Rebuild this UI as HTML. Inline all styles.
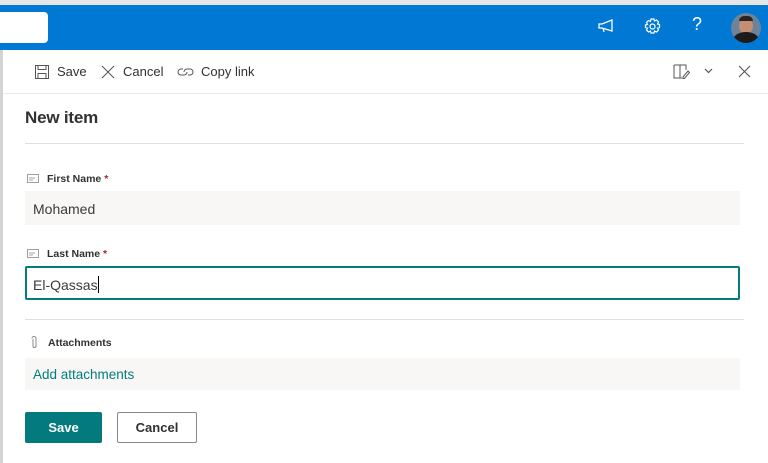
<!DOCTYPE html>
<html><head><style>
*{box-sizing:border-box;margin:0;padding:0}
body{width:768px;height:463px;overflow:hidden;background:#fff;font-family:"Liberation Sans",sans-serif;position:relative;color:#323130}
.a{position:absolute}
.top{left:0;top:0;width:768px;height:5px;background:#e6e6e6}
.bar{left:0;top:5px;width:768px;height:45px;background:#0078d4}
.search{left:-6px;top:12px;width:54px;height:31px;background:#fff;border-radius:4px}
.lb{left:0;top:50px;width:3px;height:413px;background:#d4d4d4}
.cmd{font-size:13px;color:#323130;top:64px}
.lbl{font-size:10.5px;font-weight:bold;color:#323130}
.star{color:#a4262c}
.fld{background:#f8f7f6;left:25px;width:715px}
.tx{font-size:14px;color:#3b3a39}
</style></head><body>
<div class="a top"></div>
<div class="a bar"></div>
<div class="a search"></div>
<svg class="a" style="left:598px;top:19px" width="18" height="14" viewBox="0 0 18 14" fill="none" stroke="#fff" stroke-width="1.3"><path d="M1 5h3l10-4v11L4 9H1z M5 9l1 4"/></svg>
<svg class="a" style="left:644px;top:18px" width="17" height="17" viewBox="0 0 17 17" fill="none" stroke="#fff" stroke-width="1.2"><circle cx="8.5" cy="8.5" r="2.5"/><path d="M7 1h3l.5 2 2-1 2 2-1 2 2 .5v3l-2 .5 1 2-2 2-2-1-.5 2H7l-.5-2-2 1-2-2 1-2-2-.5V7l2-.5-1-2 2-2 2 1z"/></svg>
<div class="a" style="left:692px;top:14px;color:#fff;font-size:18px">?</div>
<div class="a" style="left:731px;top:13px;width:30px;height:30px;border-radius:50%;overflow:hidden;background:#6d8399">
<div class="a" style="left:8px;top:5px;width:14px;height:16px;border-radius:50%;background:#c48e72"></div>
<div class="a" style="left:2px;top:19px;width:26px;height:16px;border-radius:50% 50% 0 0;background:#1c1a1a"></div>
<div class="a" style="left:8px;top:3px;width:14px;height:5px;border-radius:6px 6px 0 0;background:#2a2220"></div>
</div>
<div class="a lb"></div>
<svg class="a" style="left:35px;top:65px" width="14" height="14" viewBox="0 0 14 14" fill="none" stroke="#555" stroke-width="1"><rect x=".5" y=".5" width="13" height="13"/><path d="M3 .5v4h8v-4M3 13.5v-5h8v5"/></svg>
<div class="a cmd" style="left:57px">Save</div>
<svg class="a" style="left:101px;top:65px" width="14" height="14" viewBox="0 0 14 14" stroke="#555" stroke-width="1"><path d="M1 1l12 12M13 1L1 13"/></svg>
<div class="a cmd" style="left:123px">Cancel</div>
<svg class="a" style="left:177px;top:66px" width="17" height="12" viewBox="0 0 17 12" fill="none" stroke="#555" stroke-width="1"><path d="M6 3H4a3 3 0 0 0 0 6h3a3 3 0 0 0 3-3M11 9h2a3 3 0 0 0 0-6h-3a3 3 0 0 0-3 3"/></svg>
<div class="a cmd" style="left:201px">Copy link</div>
<svg class="a" style="left:673px;top:64px" width="17" height="15" viewBox="0 0 17 15" fill="none" stroke="#555" stroke-width="1"><path d="M1 1h12v5M1 1v13h8M7 1v13M10 13l5-6 1.5 1.5-5 6H10z"/></svg>
<svg class="a" style="left:704px;top:68px" width="9" height="6" viewBox="0 0 9 6" fill="none" stroke="#555" stroke-width="1.2"><path d="M1 1l3.5 3.5L8 1"/></svg>
<svg class="a" style="left:738px;top:65px" width="13" height="13" viewBox="0 0 13 13" stroke="#555" stroke-width="1.1"><path d="M1 1l11 11M12 1L1 12"/></svg>
<div class="a" style="left:3px;top:93px;width:765px;height:1px;background:#edebe9"></div>
<div class="a" style="left:25px;top:108px;font-size:17px;font-weight:bold;color:#323130;letter-spacing:-.2px">New item</div>
<div class="a" style="left:25px;top:143px;width:719px;height:1px;background:#e1dfdd"></div>
<svg class="a" style="left:27px;top:174px" width="12" height="9" viewBox="0 0 12 9" fill="none" stroke="#888" stroke-width=".8"><rect x=".5" y=".5" width="11" height="8"/><path d="M2 4h6M2 6h4"/></svg>
<div class="a lbl" style="left:47px;top:173px">First Name <span class="star">*</span></div>
<div class="a fld" style="top:191px;height:34px"></div>
<div class="a tx" style="left:33px;top:201px">Mohamed</div>
<svg class="a" style="left:27px;top:249px" width="12" height="9" viewBox="0 0 12 9" fill="none" stroke="#888" stroke-width=".8"><rect x=".5" y=".5" width="11" height="8"/><path d="M2 4h6M2 6h4"/></svg>
<div class="a lbl" style="left:47px;top:248px">Last Name <span class="star">*</span></div>
<div class="a" style="left:25px;top:266px;width:715px;height:34px;border:2px solid #037c7e;border-radius:2px"></div>
<div class="a tx" style="left:33px;top:276px">El-Qassas<span style="display:inline-block;width:1px;height:17px;background:#000;vertical-align:-3px"></span></div>
<div class="a" style="left:25px;top:319px;width:719px;height:1px;background:#e1dfdd"></div>
<svg class="a" style="left:31px;top:336px" width="7" height="13" viewBox="0 0 7 13" fill="none" stroke="#888" stroke-width="1"><path d="M2 3v7a1.5 1.5 0 0 0 3 0V2.5a2 2 0 0 0-4 0"/></svg>
<div class="a lbl" style="left:48px;top:337px">Attachments</div>
<div class="a fld" style="top:358px;height:32px"></div>
<div class="a" style="left:33px;top:367px;font-size:13.5px;color:#037c7e">Add attachments</div>
<div class="a" style="left:25px;top:412px;width:77px;height:31px;background:#037b7e;border-radius:2px;color:#fff;font-size:13px;font-weight:bold;text-align:center;line-height:31px">Save</div>
<div class="a" style="left:117px;top:412px;width:80px;height:31px;border:1px solid #8a8886;border-radius:2px;color:#323130;font-size:13px;font-weight:bold;text-align:center;line-height:29px">Cancel</div>
</body></html>
